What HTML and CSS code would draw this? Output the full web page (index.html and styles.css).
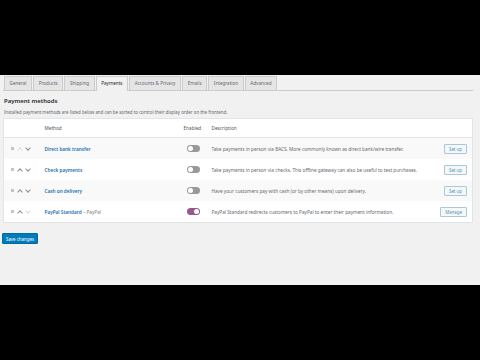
FILE: index.html
```html
<!DOCTYPE html>
<html>
<head>
    <title>WooCommerce Settings - Payments</title>
    <link rel="stylesheet" href="styles.css">
</head>
<body>
    <div class="screen">
        <nav class="tabs">
            <a class="tab">General</a>
            <a class="tab">Products</a>
            <a class="tab">Shipping</a>
            <a class="tab active">Payments</a>
            <a class="tab">Accounts &amp; Privacy</a>
            <a class="tab">Emails</a>
            <a class="tab">Integration</a>
            <a class="tab">Advanced</a>
        </nav>

        <h2 class="title">Payment methods</h2>
        <p class="intro">Installed payment methods are listed below and can be sorted to control their display order on the frontend.</p>

        <table class="gateways">
            <colgroup>
                <col class="c-sort">
                <col class="c-name">
                <col class="c-status">
                <col class="c-desc">
                <col class="c-action">
            </colgroup>
            <thead>
                <tr>
                    <th></th>
                    <th>Method</th>
                    <th>Enabled</th>
                    <th>Description</th>
                    <th></th>
                </tr>
            </thead>
            <tbody>
                <tr>
                    <td class="sort"><span class="handle"></span><span class="arrow up off"></span><span class="arrow down"></span></td>
                    <td class="name"><a>Direct bank transfer</a></td>
                    <td><span class="toggle"></span></td>
                    <td class="desc">Take payments in person via BACS. More commonly known as direct bank/wire transfer.</td>
                    <td class="action"><button class="btn">Set up</button></td>
                </tr>
                <tr>
                    <td class="sort"><span class="handle"></span><span class="arrow up"></span><span class="arrow down"></span></td>
                    <td class="name"><a>Check payments</a></td>
                    <td><span class="toggle"></span></td>
                    <td class="desc">Take payments in person via checks. This offline gateway can also be useful to test purchases.</td>
                    <td class="action"><button class="btn">Set up</button></td>
                </tr>
                <tr>
                    <td class="sort"><span class="handle"></span><span class="arrow up"></span><span class="arrow down"></span></td>
                    <td class="name"><a>Cash on delivery</a></td>
                    <td><span class="toggle"></span></td>
                    <td class="desc">Have your customers pay with cash (or by other means) upon delivery.</td>
                    <td class="action"><button class="btn">Set up</button></td>
                </tr>
                <tr>
                    <td class="sort"><span class="handle"></span><span class="arrow up"></span><span class="arrow down off"></span></td>
                    <td class="name"><a>PayPal Standard</a> <span class="sub">&ndash; PayPal</span></td>
                    <td><span class="toggle on"></span></td>
                    <td class="desc">PayPal Standard redirects customers to PayPal to enter their payment information.</td>
                    <td class="action"><button class="btn">Manage</button></td>
                </tr>
            </tbody>
        </table>

        <button class="save">Save changes</button>
    </div>
</body>
</html>
```

FILE: styles.css
```css
body {
    margin: 0;
    padding: 75px 0 0;
    background: #000;
    font-family: "Noto Sans", "Open Sans", sans-serif;
    color: #3c434a;
    height: 360px;
    box-sizing: border-box;
}

.screen {
    height: 210px;
    background: #f1f1f1;
    padding: 1px 7px 0 3px;
    box-sizing: border-box;
}

.tabs {
    display: flex;
    gap: 1px;
    padding-left: 1px;
    border-bottom: 1px solid #ccc;
    height: 14px;
}

.tab {
    display: block;
    font-size: 4.6px;
    line-height: 13px;
    padding: 0 4.6px;
    border: 1px solid #ccc;
    border-bottom: none;
    background: #e5e5e5;
    color: #646970;
    white-space: nowrap;
}

.tab.active {
    background: #f1f1f1;
    color: #1d2327;
    margin-bottom: -1px;
}

.title {
    font-size: 6px;
    font-weight: 600;
    color: #1d2327;
    margin: 6px 0 0 1px;
    line-height: 8px;
}

.intro {
    font-size: 4.4px;
    margin: 4px 0 0 1px;
    line-height: 6px;
    color: #646970;
}

.gateways {
    width: 470px;
    margin-top: 3px;
    border-collapse: collapse;
    table-layout: fixed;
    background: #fff;
    border: 1px solid #e2e4e7;
    font-size: 4.7px;
}

.c-sort { width: 37px; }
.c-name { width: 140px; }
.c-status { width: 27px; }
.c-desc { width: 226px; }

.gateways th {
    text-align: left;
    font-weight: 400;
    color: #50575e;
    height: 18px;
    padding: 0 4px;
    border-bottom: 1px solid #e2e4e7;
}

.gateways th:nth-child(3) {
    padding-left: 3px;
}

.gateways td {
    height: 21px;
    padding: 0 4px;
    vertical-align: middle;
    white-space: nowrap;
}

.gateways tbody tr:nth-child(odd) {
    background: #f9f9f9;
}

.gateways td:nth-child(3) {
    padding-left: 6px;
}

.sort {
    display: flex;
    align-items: center;
    gap: 4px;
    padding-left: 7px !important;
    height: 21px;
}

.handle {
    width: 3px;
    height: 3px;
    border-top: 1px solid #c3c4c7;
    border-bottom: 1px solid #c3c4c7;
    background: linear-gradient(#c3c4c7, #c3c4c7) center / 100% 1px no-repeat;
    box-sizing: border-box;
}

.arrow {
    width: 3px;
    height: 3px;
    border-left: 1px solid #8c8f94;
    border-top: 1px solid #8c8f94;
}

.arrow.up {
    transform: rotate(45deg);
    margin-top: 2px;
}

.arrow.down {
    transform: rotate(225deg);
    margin-top: -2px;
}

.arrow.off {
    border-color: #dcdcde;
}

.name a {
    color: #2271b1;
    font-weight: 600;
}

.sub {
    color: #787c82;
}

.desc {
    color: #646970;
}

.toggle {
    display: block;
    width: 13px;
    height: 7px;
    border-radius: 4px;
    background: #999;
    position: relative;
}

.toggle::after {
    content: "";
    position: absolute;
    left: 1px;
    top: 1px;
    width: 5px;
    height: 5px;
    border-radius: 50%;
    background: #fff;
}

.toggle.on {
    background: #96588a;
}

.toggle.on::after {
    left: 7px;
}

.action {
    text-align: right;
}

.btn {
    font-family: inherit;
    font-size: 4.4px;
    height: 10px;
    padding: 0 4px;
    color: #4f94bd;
    background: #f6f7f7;
    border: 1px solid #a8c8dc;
    border-radius: 1px;
    margin-right: 1px;
}

.save {
    display: block;
    margin-top: 10px;
    margin-left: -1px;
    font-family: inherit;
    font-size: 4.4px;
    height: 11px;
    width: 36px;
    padding: 0;
    color: #fff;
    background: #007cba;
    border: 1px solid #006ba1;
    border-radius: 1px;
}
```
